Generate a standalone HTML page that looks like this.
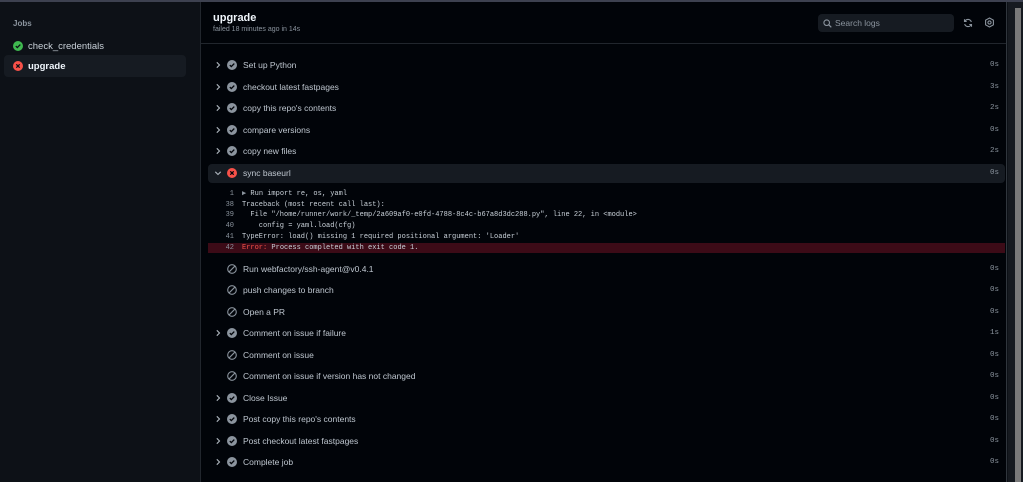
<!DOCTYPE html>
<html><head><meta charset="utf-8"><style>
*{margin:0;padding:0;box-sizing:border-box}
body{width:1023px;height:482px;overflow:hidden;background:#0d1117;font-family:"Liberation Sans",sans-serif;color:#c9d1d9;position:relative}
.top{position:absolute;left:0;top:0;width:1023px;height:2px;background:#3d4150}
.side{position:absolute;left:0;top:2px;width:200px;height:480px;background:#0d1117}
.side .h{position:absolute;left:13px;top:17px;font-size:8px;color:#8b949e;font-weight:bold}
.job{position:absolute;left:4px;width:182px;height:22px;border-radius:4px;font-size:9.5px;display:flex;align-items:center;padding-left:9px}
.job svg{margin-right:5px}
.main{position:absolute;left:200px;top:2px;width:807px;height:480px;background:#010409;border-left:1px solid #21262d;border-right:1px solid #30363d}
.hdr{height:42px;border-bottom:1px solid #21262d;position:relative}
.hdr .t{position:absolute;left:12px;top:10px;font-size:11px;font-weight:bold;color:#f0f6fc}
.hdr .s{position:absolute;left:12px;top:24px;font-size:7px;color:#8b949e}
.search{position:absolute;left:617px;top:12px;width:136px;height:18px;background:#161b22;border-radius:4px;font-size:8.5px;color:#8b949e;padding:4px 0 0 17px}
.search svg{position:absolute;left:5px;top:5px}
.row{position:absolute;left:7px;width:797px;height:19px;font-size:8.5px;color:#bfc7d0;display:flex;align-items:center}
.row .c{width:8px;margin-left:6px;height:8px;display:flex}
.row .i{margin-left:5px;width:10px;height:10px}
.row .n{margin-left:6px}
.row .d{position:absolute;right:6px;font-family:"Liberation Mono",monospace;font-size:7.5px;color:#8b949e}
.log{position:absolute;left:7px;width:797px;height:10.7px;font-family:"Liberation Mono",monospace;font-size:7px;color:#c9d1d9;line-height:10.7px}
.log .ln{display:inline-block;width:26px;text-align:right;color:#8b949e;margin-right:8px}
.sb{position:absolute;left:1008px;top:2px;width:15px;height:480px;background:#161a20}
.thumb{position:absolute;left:1015px;top:8px;width:6px;height:474px;background:#7a7a7a}
</style></head><body>
<div class="top"></div>
<div class="side">
<div class="h">Jobs</div>
<div class="job" style="top:33px"><svg width="10" height="10" viewBox="0 0 10 10"><circle cx="5" cy="5" r="5" fill="#3fb950"/><path d="M2.8 5.1l1.5 1.5 3-3" stroke="#0d1117" stroke-width="1.3" fill="none"/></svg>check_credentials</div>
<div class="job" style="top:53px;background:#161b22;font-weight:bold;color:#f0f6fc"><svg width="10" height="10" viewBox="0 0 10 10"><circle cx="5" cy="5" r="5" fill="#f85149"/><path d="M3.3 3.3l3.4 3.4M6.7 3.3l-3.4 3.4" stroke="#0d1117" stroke-width="1.3"/></svg>upgrade</div>
</div>
<div class="main">
<div class="hdr"><div class="t">upgrade</div><div class="s">failed 18 minutes ago in 14s</div>
<div class="search"><svg width="9" height="9" viewBox="0 0 9 9"><circle cx="3.7" cy="3.7" r="2.8" stroke="#8b949e" stroke-width="1.1" fill="none"/><path d="M5.8 5.8l2.5 2.5" stroke="#8b949e" stroke-width="1.2"/></svg>Search logs</div>
<svg style="position:absolute;left:762px;top:16px" width="10" height="10" viewBox="0 0 10 10"><path d="M8.3 4A3.5 3.5 0 0 0 2 3M1.7 6a3.5 3.5 0 0 0 6.3 1" stroke="#8b949e" stroke-width="1.1" fill="none"/><path d="M1.5 1.3v2.2h2.2M8.5 8.7V6.5H6.3" stroke="#8b949e" stroke-width="1.1" fill="none"/></svg>
<svg style="position:absolute;left:783px;top:15px" width="11" height="11" viewBox="0 0 11 11"><path d="M5.5 1l3.9 2.2v4.6L5.5 10 1.6 7.8V3.2z" stroke="#8b949e" stroke-width="1.1" fill="none"/><circle cx="5.5" cy="5.5" r="1.6" stroke="#8b949e" stroke-width="1.1" fill="none"/></svg>
</div>
<div id="rows"></div>
</div>
<div class="sb"></div><div class="thumb"></div>
<script>
const ok='<svg class="i" viewBox="0 0 10 10"><circle cx="5" cy="5" r="5" fill="#8b949e"/><path d="M2.8 5.1l1.5 1.5 3-3" stroke="#010409" stroke-width="1.3" fill="none"/></svg>';
const sk='<svg class="i" viewBox="0 0 10 10"><circle cx="5" cy="5" r="4.3" stroke="#8b949e" stroke-width="1.1" fill="none"/><path d="M2.2 7.8l5.6-5.6" stroke="#8b949e" stroke-width="1.1"/></svg>';
const er='<svg class="i" viewBox="0 0 10 10"><circle cx="5" cy="5" r="5" fill="#f85149"/><path d="M3.3 3.3l3.4 3.4M6.7 3.3l-3.4 3.4" stroke="#010409" stroke-width="1.3"/></svg>';
const chR='<svg width="8" height="8" viewBox="0 0 8 8"><path d="M2.8 1.3L5.5 4 2.8 6.7" stroke="#adb5bd" stroke-width="1.1" fill="none"/></svg>';
const chD='<svg width="8" height="8" viewBox="0 0 8 8"><path d="M1.3 2.8L4 5.5 6.7 2.8" stroke="#adb5bd" stroke-width="1.1" fill="none"/></svg>';
const R=[[64,'Set up Python','0s',1,ok],[86,'checkout latest fastpages','3s',1,ok],[107,"copy this repo's contents",'2s',1,ok],[129,'compare versions','0s',1,ok],[150,'copy new files','2s',1,ok],[172,'sync baseurl','0s',2,er],
[268,'Run webfactory/ssh-agent@v0.4.1','0s',0,sk],[289,'push changes to branch','0s',0,sk],[311,'Open a PR','0s',0,sk],[332,'Comment on issue if failure','1s',1,ok],[354,'Comment on issue','0s',0,sk],[375,'Comment on issue if version has not changed','0s',0,sk],[397,'Close Issue','0s',1,ok],[418,"Post copy this repo's contents",'0s',1,ok],[440,'Post checkout latest fastpages','0s',1,ok],[461,'Complete job','0s',1,ok]];
let h='';
for(const r of R){const top=r[0]-9.5-1;const bg=r[3]==2?'background:#161b22;border-radius:4px;':'';
h+=`<div class="row" style="top:${top}px;${bg}"><span class="c">${r[3]==1?chR:r[3]==2?chD:''}</span>${r[4]}<span class="n">${r[1]}</span><span class="d">${r[2]}</span></div>`;}
const L=[[1,'<span style="color:#8b949e">▶</span> Run import re, os, yaml'],[38,'Traceback (most recent call last):'],[39,'  File "/home/runner/work/_temp/2a609af0-e0fd-4788-8c4c-b67a8d3dc288.py", line 22, in &lt;module&gt;'],[40,'    config = yaml.load(cfg)'],[41,"TypeError: load() missing 1 required positional argument: 'Loader'"],[42,'<span style="color:#f85149">Error:</span> Process completed with exit code 1.']];
L.forEach((l,k)=>{const top=187+k*10.7;const bg=k==5?'background:#3c0b17;':'';h+=`<div class="log" style="top:${top}px;${bg}white-space:pre"><span class="ln">${l[0]}</span>${l[1]}</div>`});
document.getElementById('rows').innerHTML=h;
</script>
</body></html>
